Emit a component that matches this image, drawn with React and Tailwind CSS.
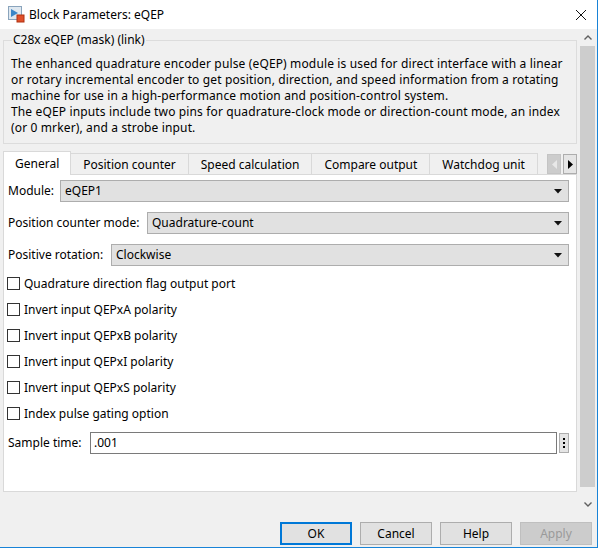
import React from "react";

const FONT = { fontFamily: '"Noto Sans", "Open Sans", sans-serif' };

const tabs = ["Position counter", "Speed calculation", "Compare output", "Watchdog unit"];

const checks = [
  "Quadrature direction flag output port",
  "Invert input QEPxA polarity",
  "Invert input QEPxB polarity",
  "Invert input QEPxI polarity",
  "Invert input QEPxS polarity",
  "Index pulse gating option",
];

// little Simulink block glyph in the caption
const BlockIcon = () => (
  <svg width="17" height="17" viewBox="0 0 17 17">
    <rect x="0.5" y="0.5" width="13" height="13" fill="#dfe8f0" stroke="#8aa4bc" />
    <path d="M3 3 L10 7 L3 11 Z" fill="#3a86c8" />
    <rect x="9" y="9" width="7" height="7" fill="#e0502a" stroke="#b03010" />
  </svg>
);

const Caret = () => (
  <svg width="8" height="5" viewBox="0 0 8 5">
    <path d="M0 0 H8 L4 4.5 Z" fill="#111" />
  </svg>
);

const Select = ({ value, className }) => (
  <div
    className={`h-[22px] flex items-center justify-between bg-[#e1e1e1] border border-[#adadad] pl-[4px] pr-[6px] ${className}`}
  >
    <span>{value}</span>
    <Caret />
  </div>
);

const Button = ({ children, primary, disabled }) => (
  <div
    className={`w-[72px] h-[23px] flex items-center justify-center ${
      primary
        ? "border-2 border-[#0078d7] bg-[#e1e1e1]"
        : disabled
        ? "border border-[#bfbfbf] bg-[#cccccc] text-[#9a9a9a]"
        : "border border-[#adadad] bg-[#e1e1e1]"
    }`}
  >
    {children}
  </div>
);

export default function App() {
  return (
    <div
      className="w-[598px] h-[548px] bg-[#f0f0f0] border-r border-b border-[#1883d7] flex flex-col text-[12px] leading-[16px] text-black"
      style={FONT}
    >
      {/* caption bar */}
      <div className="h-[29px] bg-white flex items-center pl-[8px] pr-[10px] shrink-0">
        <BlockIcon />
        <span className="ml-[4px]">Block Parameters: eQEP</span>
        <svg className="ml-auto" width="12" height="12" viewBox="0 0 12 12">
          <path d="M1 1 L11 11 M11 1 L1 11" stroke="#111" strokeWidth="1" />
        </svg>
      </div>

      <div className="flex h-[484px] shrink-0">
        <div className="flex-1 pl-[3px] flex flex-col">
          <fieldset className="mt-[3px] border border-[#dcdcdc] pl-[8px] pr-[6px] pb-[7px] w-[574px]">
            <legend className="px-[1px]">C28x eQEP (mask) (link)</legend>
            <p className="pt-[8px] -ml-[1px] tracking-[0.14px]">
              The enhanced quadrature encoder pulse (eQEP) module is used for direct interface with a linear
              <br />
              or rotary incremental encoder to get position, direction, and speed information from a rotating
              <br />
              machine for use in a high-performance motion and position-control system.
              <br />
              The eQEP inputs include two pins for quadrature-clock mode or direction-count mode, an index
              <br />
              (or 0 mrker), and a strobe input.
            </p>
          </fieldset>

          {/* tab strip */}
          <div className="mt-[7px] w-[574px] flex items-end h-[24px] relative z-10">
            <div className="h-[24px] bg-white border border-b-0 border-[#d9d9d9] px-[11px] flex items-center">
              General
            </div>
            {tabs.map((t) => (
              <div
                key={t}
                className="h-[22px] border border-l-0 border-b-0 border-[#d9d9d9] px-[12px] flex items-center"
              >
                {t}
              </div>
            ))}
            <div className="h-[22px] flex-1 overflow-hidden flex items-center justify-end gap-[2px]">
              <div className="w-[14px] h-[20px] bg-[#cccccc] border border-[#c4c4c4] flex items-center justify-center">
                <svg width="5" height="9" viewBox="0 0 5 9">
                  <path d="M5 0 V9 L0 4.5 Z" fill="#e8e8e8" />
                </svg>
              </div>
              <div className="w-[14px] h-[20px] bg-[#e5e5e5] border border-[#adadad] flex items-center justify-center">
                <svg width="5" height="9" viewBox="0 0 5 9">
                  <path d="M0 0 V9 L5 4.5 Z" fill="#000" />
                </svg>
              </div>
            </div>
          </div>

          {/* General panel */}
          <div className="-mt-px w-[574px] h-[318px] bg-white border border-[#d9d9d9] pl-[4px] pr-[7px] pt-[5px] flex flex-col">
            <div className="flex items-center h-[22px]">
              <span className="w-[52px]">Module:</span>
              <Select value="eQEP1" className="flex-1" />
            </div>
            <div className="flex items-center h-[22px] mt-[10px]">
              <span className="w-[139px]">Position counter mode:</span>
              <Select value="Quadrature-count" className="flex-1" />
            </div>
            <div className="flex items-center h-[22px] mt-[10px]">
              <span className="w-[103px]">Positive rotation:</span>
              <Select value="Clockwise" className="flex-1" />
            </div>

            <div className="mt-[11px] flex flex-col gap-[13px] -ml-[1px]">
              {checks.map((c) => (
                <div key={c} className="flex items-center h-[13px]">
                  <span className="w-[13px] h-[13px] border border-[#333] bg-white shrink-0" />
                  <span className="ml-[4px]">{c}</span>
                </div>
              ))}
            </div>

            <div className="flex items-center h-[22px] mt-[12px]">
              <span className="w-[82px]">Sample time:</span>
              <div className="flex-1 h-[22px] border border-[#7a7a7a] flex items-center pl-[3px]">.001</div>
              <div className="ml-[2px] w-[10px] h-[20px] bg-[#e5e5e5] border border-[#adadad] flex flex-col items-center justify-center gap-[2px]">
                <span className="w-[2px] h-[2px] bg-black" />
                <span className="w-[2px] h-[2px] bg-black" />
                <span className="w-[2px] h-[2px] bg-black" />
              </div>
            </div>
          </div>
        </div>

        {/* vertical scroll bar */}
        <div className="w-[19px] flex flex-col items-center bg-[#f0f0f0]">
          <div className="h-[17px] w-full flex items-center justify-center">
            <svg width="8" height="5" viewBox="0 0 8 5">
              <path d="M0.5 4.5 L4 1 L7.5 4.5" fill="none" stroke="#606060" strokeWidth="1.4" />
            </svg>
          </div>
          <div className="w-[15px] h-[441px] bg-[#cdcdcd]" />
          <div className="flex-1 w-full flex items-end justify-center pb-[6px]">
            <svg width="8" height="5" viewBox="0 0 8 5">
              <path d="M0.5 0.5 L4 4 L7.5 0.5" fill="none" stroke="#606060" strokeWidth="1.4" />
            </svg>
          </div>
        </div>
      </div>

      {/* dialog buttons */}
      <div className="flex justify-end gap-[8px] pt-[9px] pr-[5px]">
        <Button primary>OK</Button>
        <Button>Cancel</Button>
        <Button>Help</Button>
        <Button disabled>Apply</Button>
      </div>
    </div>
  );
}
